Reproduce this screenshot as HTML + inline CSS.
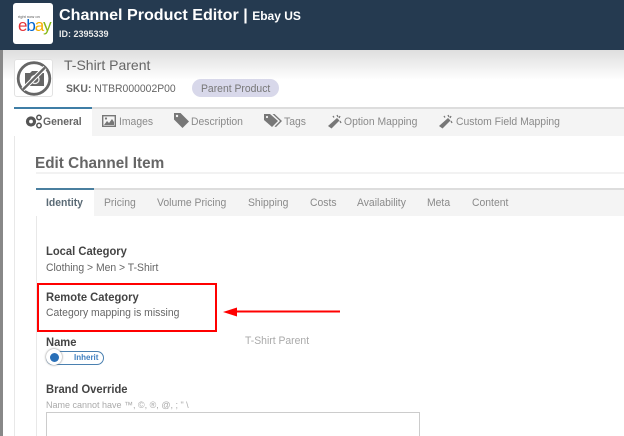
<!DOCTYPE html>
<html style="width:624px;height:436px;overflow:hidden"><head><meta charset="utf-8"><style>
html,body{margin:0;padding:0}
body{width:624px;height:436px;overflow:hidden;position:relative;background:#fff;font-family:"Liberation Sans",sans-serif}
#r{position:absolute;left:0;top:0;width:624px;height:436px;overflow:hidden}
.a{position:absolute;white-space:nowrap}
.tab{font-size:11.400px;color:#8a8a8a;transform:translateY(1px) scaleX(.912);transform-origin:0 50%}
.b{color:#444;font-weight:bold;font-size:12px;transform:scaleX(.933);transform-origin:0 50%}
.g{color:#666;font-size:11.400px;transform:translateY(1px) scaleX(.912);transform-origin:0 50%}
</style></head><body><div id="r">
<div class="a" style="left:0;top:0;width:624px;height:50px;background:#253a50"></div>
<div class="a" style="left:0;top:50px;width:624px;height:30px;background:linear-gradient(#dedede,#fff)"></div>
<div class="a" style="left:0;top:50px;width:3px;height:386px;background:#888"></div>
<div class="a" style="left:13px;top:3px;width:40px;height:41px;background:#fff;border-radius:3px"></div>
<div class="a" style="left:18px;top:14px;font-size:4px;color:#555">right now on</div>
<div class="a" style="left:18px;top:17px;font-size:17px;letter-spacing:-1.100px;line-height:18px"><span style="color:#e53238">e</span><span style="color:#0064d2">b</span><span style="color:#f5af02">a</span><span style="color:#86b817">y</span></div>
<div class="a" style="left:59px;top:4px;font-size:16.100px;font-weight:bold;color:#fff;line-height:22px">Channel Product Editor <span style="font-weight:bold">|</span> <span style="font-size:12px">Ebay US</span></div>
<div class="a" style="left:59px;top:27px;font-size:9px;font-weight:bold;color:#e8e8e8;line-height:14px">ID: 2395339</div>
<div class="a" style="left:14px;top:59px;width:39px;height:38px;background:#fff;border:1px solid #e2e2e2;border-radius:3px;box-sizing:border-box"></div>
<svg class="a" style="left:15px;top:60px" width="38" height="38" viewBox="0 0 38 38"><circle cx="19" cy="18.500" r="15.800" fill="none" stroke="#666" stroke-width="2.800"/><path d="M10 13h5l2-2h6l2 2h4v13H10z" fill="#666"/><circle cx="20" cy="19.500" r="4" fill="none" stroke="#eee" stroke-width="1.300"/><path d="M8 29.500L30 7.500" stroke="#fff" stroke-width="4.500"/><path d="M8 29.500L30 7.500" stroke="#666" stroke-width="2.400"/></svg>
<div class="a" style="left:64px;top:57px;font-size:14px;color:#666;line-height:17px">T-Shirt Parent</div>
<div class="a g" style="left:66px;top:80px;line-height:16px"><b>SKU:</b> NTBR000002P00</div>
<div class="a" style="left:192px;top:79px;width:87px;height:18px;border-radius:9px;background:#d8d8ea"></div>
<div class="a g" style="left:201px;top:80px;line-height:16px;color:#777">Parent Product</div>
<div class="a" style="left:14px;top:107px;width:610px;height:29px;background:#f4f4f4;border-top:2px solid #ddd;box-sizing:border-box"></div>
<div class="a" style="left:14px;top:107px;width:78px;height:30px;background:#fff;border-top:2px solid #3f7ea6;box-sizing:border-box"></div>
<div class="a" style="left:14px;top:136px;width:1px;height:300px;background:#e8e8e8"></div>
<svg class="a" style="left:25px;top:114px" width="18" height="15" viewBox="0 0 18 15"><circle cx="6" cy="7.500" r="3.500" fill="none" stroke="#555" stroke-width="3.200"/><circle cx="14" cy="3.500" r="2.200" fill="none" stroke="#555" stroke-width="1.500"/><circle cx="14" cy="11.500" r="2.200" fill="none" stroke="#555" stroke-width="1.500"/></svg>
<div class="a tab" style="left:43px;top:114px;font-weight:bold;color:#666;line-height:15px">General</div>
<svg class="a" style="left:102px;top:115px" width="14" height="12" viewBox="0 0 14 12"><rect x=".7" y=".7" width="12.600" height="10.600" fill="none" stroke="#777" stroke-width="1.400"/><path d="M2 10l3-4 2 2 3-4 2 3v3z" fill="#777"/><circle cx="4" cy="3.500" r="1.100" fill="#777"/></svg>
<div class="a tab" style="left:119px;top:114px;line-height:15px">Images</div>
<svg class="a" style="left:174px;top:113px" width="15" height="15" viewBox="0 0 15 15"><path d="M0 0h6.500L15 8.500 8.500 15 0 6.500z" fill="#777"/><circle cx="3" cy="3" r="1.200" fill="#f4f4f4"/></svg>
<div class="a tab" style="left:191px;top:114px;line-height:15px">Description</div>
<svg class="a" style="left:264px;top:113px" width="18" height="15" viewBox="0 0 18 15"><path d="M0 1h6l8 7-6 6-8-7z" fill="#777"/><path d="M8.500 1h2l7.500 7-6 6-1.500-.5 5.500-5.500z" fill="#777"/><circle cx="3" cy="4" r="1.100" fill="#f4f4f4"/></svg>
<div class="a tab" style="left:284px;top:114px;line-height:15px">Tags</div>
<svg class="a" style="left:327px;top:114px" width="15" height="15" viewBox="0 0 15 15"><path d="M1 12L10 4l2.500 2.500-8 8z" fill="#777"/><path d="M10 1l1 2M13 2l-1 2M13 7l1 2M6 2l1 1.500" stroke="#777" stroke-width="1.300"/></svg>
<div class="a tab" style="left:344px;top:114px;line-height:15px">Option Mapping</div>
<svg class="a" style="left:438px;top:114px" width="15" height="15" viewBox="0 0 15 15"><path d="M1 12L10 4l2.500 2.500-8 8z" fill="#777"/><path d="M10 1l1 2M13 2l-1 2M13 7l1 2M6 2l1 1.500" stroke="#777" stroke-width="1.300"/></svg>
<div class="a tab" style="left:456px;top:114px;line-height:15px">Custom Field Mapping</div>
<div class="a" style="left:35px;top:155px;font-size:15.300px;font-weight:bold;color:#666;line-height:18px">Edit Channel Item</div>
<div class="a" style="left:36px;top:172px;width:588px;height:2px;background:#f2f2f2"></div>
<div class="a" style="left:36px;top:188px;width:588px;height:28px;background:#f4f4f4;border-top:2px solid #ddd;box-sizing:border-box"></div>
<div class="a" style="left:36px;top:188px;width:58px;height:29px;background:#fff;border-top:2px solid #4a7f9f;box-sizing:border-box"></div>
<div class="a" style="left:36px;top:216px;width:1px;height:220px;background:#e8e8e8"></div>
<div class="a tab" style="left:46px;top:195px;line-height:15px;font-weight:bold;color:#5a6a75">Identity</div>
<div class="a tab" style="left:104px;top:195px;line-height:15px">Pricing</div>
<div class="a tab" style="left:157px;top:195px;line-height:15px">Volume Pricing</div>
<div class="a tab" style="left:248px;top:195px;line-height:15px">Shipping</div>
<div class="a tab" style="left:310px;top:195px;line-height:15px">Costs</div>
<div class="a tab" style="left:357px;top:195px;line-height:15px">Availability</div>
<div class="a tab" style="left:427px;top:195px;line-height:15px">Meta</div>
<div class="a tab" style="left:472px;top:195px;line-height:15px">Content</div>
<div class="a b" style="left:46px;top:244px;line-height:15px">Local Category</div>
<div class="a g" style="left:46px;top:260px;line-height:15px">Clothing &gt; Men &gt; T-Shirt</div>
<div class="a" style="left:37px;top:283px;width:180px;height:49px;border:2px solid #f00;box-sizing:border-box"></div>
<div class="a b" style="left:46px;top:290px;line-height:15px">Remote Category</div>
<div class="a g" style="left:46px;top:305px;line-height:15px">Category mapping is missing</div>
<svg class="a" style="left:222px;top:304px" width="120" height="16" viewBox="0 0 120 16"><path d="M12 7.500H118" stroke="#f00" stroke-width="2"/><path d="M1 8L15 3.500v9z" fill="#f00"/></svg>
<div class="a b" style="left:46px;top:335px;line-height:15px">Name</div>
<div class="a" style="left:46px;top:351px;width:58px;height:14px;border:1px solid #4a80b0;border-radius:8px;box-sizing:border-box;font-size:8px;font-weight:bold;color:#3f7fc0;line-height:12px;padding-left:27px">Inherit</div>
<div class="a" style="left:46px;top:349px;width:16px;height:16px;border-radius:50%;background:#fff;box-shadow:0 0 2px #777"></div>
<div class="a" style="left:50px;top:353px;width:9px;height:9px;border-radius:50%;background:#2a70b8"></div>
<div class="a g" style="left:245px;top:333px;color:#aaa;line-height:15px">T-Shirt Parent</div>
<div class="a b" style="left:46px;top:382px;line-height:15px">Brand Override</div>
<div class="a" style="left:46px;top:399px;font-size:9px;color:#aaa;line-height:13px">Name cannot have ™, ©, ®, @, ; " \</div>
<div class="a" style="left:46px;top:412px;width:374px;height:40px;border:1px solid #ccc;box-sizing:border-box"></div>
</div></body></html>
